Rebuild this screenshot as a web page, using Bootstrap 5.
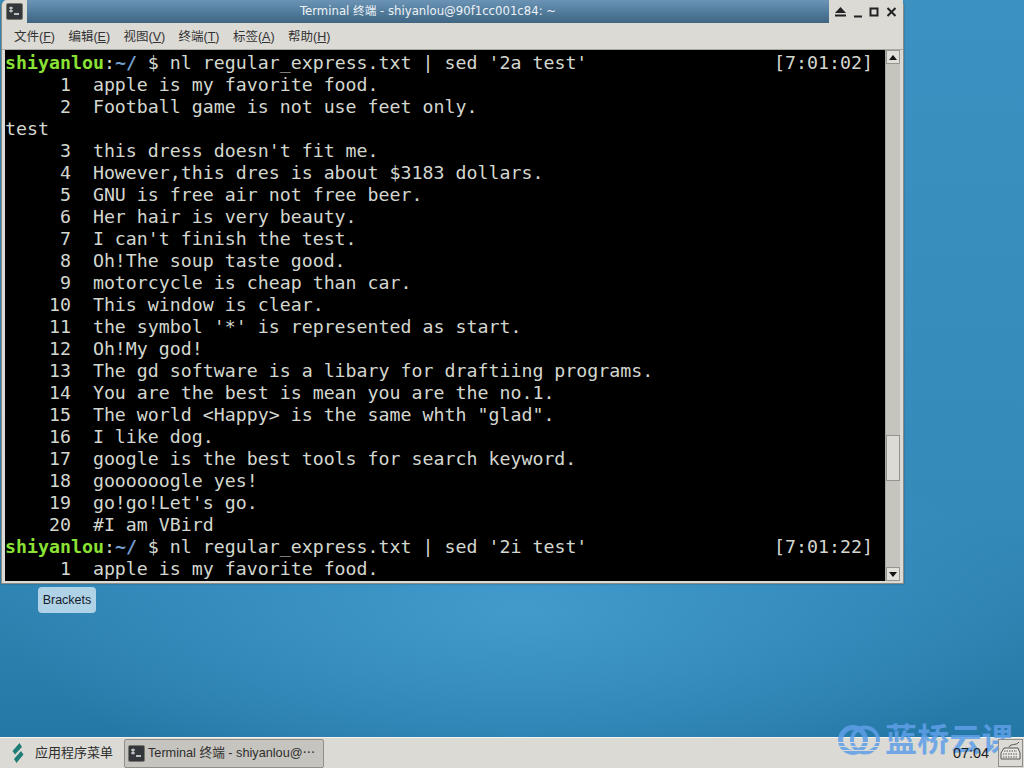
<!DOCTYPE html>
<html lang="zh">
<head>
<meta charset="utf-8">
<title>Terminal</title>
<link rel="stylesheet" href="https://cdn.jsdelivr.net/npm/bootstrap@5.3.0/dist/css/bootstrap.min.css">
<style>
html,body{height:100%;margin:0;overflow:hidden}
body{width:1024px;height:768px;font-family:"Liberation Sans","Noto Sans CJK SC",sans-serif;background:#ddd}
.desk{flex:1 1 auto;position:relative;height:737px;background:radial-gradient(ellipse 520px 190px at 520px 610px,rgba(66,156,205,.95) 0%,rgba(60,148,198,.6) 55%,rgba(60,148,198,0) 100%),linear-gradient(180deg,#3b91c1 0%,#348ab9 70%,#2478a6 100%)}
.win{position:absolute;left:1px;top:0;width:903px;height:584px;background:#dcdad5;border:1px solid #8b8b85;border-top:0;border-radius:6px 6px 0 0;box-shadow:0 0 2px rgba(0,0,0,.35)}
.tbar{height:23px;font-size:11.5px;color:#eef2f6}
.tleft{flex:1 1 auto;height:23px;background:linear-gradient(180deg,#6b93b5 0%,#557f9f 45%,#3f6582 100%);border-radius:5px 0 0 0}
.ticon{width:25px;height:23px;background:#dcdad5;border-radius:5px 0 0 0}
.ttitle{flex:1 1 auto;text-align:center;line-height:23px;font-family:"DejaVu Sans","Noto Sans CJK SC",sans-serif;font-size:11.7px}
.tbtns{width:74px;height:23px;background:#dcdad5;padding:0 6px 0 5px}
.mbar{height:27px;font-size:12.5px;color:#333;padding-left:12px;gap:13.4px;line-height:28px;border-bottom:1px solid #a9a8a2}
.mbar u{text-underline-offset:1px}
.tbody{padding:0 3px;height:533px}
.term{width:882px;height:531px;background:#000;overflow:hidden;margin:0;padding:2px 0 0 0;font:18.25px/22px "DejaVu Sans Mono",monospace;color:#d3d7cf;white-space:pre}
.tline{height:22px;padding-right:12px}
.pg{color:#8ae234;font-weight:700}
.pb{color:#729fcf;font-weight:700}
.sbar{width:15px;height:531px;background:#c5c4bd;border-left:1px solid #aaa9a3}
.sbtn{width:14px;height:14px;background:#e1dfda;border:1px solid #96958f}
.strack{flex:1 1 auto;position:relative}
.sthumb{position:absolute;left:0;top:371px;width:14px;height:46px;background:#dcdad5;border:1px solid #94938d}
.launch{position:absolute;left:38px;top:587px;width:58px;height:26px;background:#b0d2e6;border-radius:4px;color:#14202c;font-size:12.5px;line-height:26px;text-align:center}
.panel{height:31px;flex:none;background:#dcdad5;border-top:1px solid #f3f3f0;position:relative;font-size:12.5px;color:#2e2e2e}
.appmenu{width:124px;padding-left:11px;gap:10px;font-size:13px}
.task{width:200px;height:29px;margin-top:1px;background:#c6c4bf;border:1px solid #8f8e89;border-radius:2px;padding-left:3px;gap:3px;white-space:nowrap;font-size:12.7px}
.clock{position:absolute;left:953px;top:5px;font-size:14.4px;color:#1c1c1c}
.kbd{position:absolute;left:998px;top:1px}
.wm{position:absolute;left:838px;top:-15px;gap:4px;color:#5f9fe8;font-weight:700;font-size:32px;line-height:34px;letter-spacing:.2px;opacity:.85;white-space:nowrap}
</style>
</head>
<body class="d-flex flex-column">
<div class="desk">
  <div class="win d-flex flex-column">
    <div class="tbar d-flex">
      <div class="tleft d-flex">
        <div class="ticon d-flex align-items-center justify-content-center">
          <svg width="17" height="17" viewBox="0 0 17 17"><rect x=".5" y=".5" width="16" height="16" rx="1.5" fill="#33363a" stroke="#77776f"/><path d="M3 5h4M3 8h4M5 3.500v6" stroke="#eee" fill="none"/><path d="M8 11h5" stroke="#eee" stroke-width="1.500"/></svg>
        </div>
        <div class="ttitle">Terminal 终端 - shiyanlou@90f1cc001c84: ~</div>
      </div>
      <div class="tbtns d-flex align-items-center justify-content-between">
        <svg width="13" height="12" viewBox="0 0 13 12"><path d="M6.500 1 12 7H1z" fill="#222"/><path d="M1 9.500h11" stroke="#222" stroke-width="2"/></svg>
        <svg width="11" height="12" viewBox="0 0 11 12"><path d="M1 10.500h8" stroke="#222" stroke-width="2"/></svg>
        <svg width="11" height="12" viewBox="0 0 11 12"><rect x="1.500" y="2.500" width="7" height="7" fill="none" stroke="#222" stroke-width="2"/></svg>
        <svg width="11" height="12" viewBox="0 0 11 12"><path d="M1.500 2l8 8M9.500 2l-8 8" stroke="#222" stroke-width="2"/></svg>
      </div>
    </div>
    <div class="mbar d-flex">
      <span>文件(<u>F</u>)</span><span>编辑(<u>E</u>)</span><span>视图(<u>V</u>)</span><span>终端(<u>T</u>)</span><span>标签(<u>A</u>)</span><span>帮助(<u>H</u>)</span>
    </div>
    <div class="tbody d-flex">
      <div class="term"><div class="tline d-flex justify-content-between"><span><span class="pg">shiyanlou</span>:<span class="pb">~/</span> $ nl regular_express.txt | sed '2a test'</span><span>[7:01:02]</span></div>     1  apple is my favorite food.
     2  Football game is not use feet only.
test
     3  this dress doesn't fit me.
     4  However,this dres is about $3183 dollars.
     5  GNU is free air not free beer.
     6  Her hair is very beauty.
     7  I can't finish the test.
     8  Oh!The soup taste good.
     9  motorcycle is cheap than car.
    10  This window is clear.
    11  the symbol '*' is represented as start.
    12  Oh!My god!
    13  The gd software is a libary for draftiing programs.
    14  You are the best is mean you are the no.1.
    15  The world &lt;Happy&gt; is the same whth "glad".
    16  I like dog.
    17  google is the best tools for search keyword.
    18  goooooogle yes!
    19  go!go!Let's go.
    20  #I am VBird
<div class="tline d-flex justify-content-between"><span><span class="pg">shiyanlou</span>:<span class="pb">~/</span> $ nl regular_express.txt | sed '2i test'</span><span>[7:01:22]</span></div>     1  apple is my favorite food.</div>
      <div class="sbar d-flex flex-column">
        <div class="sbtn d-flex align-items-center justify-content-center"><svg width="8" height="5" viewBox="0 0 8 5"><path d="M4 0l4 5H0z" fill="#111"/></svg></div>
        <div class="strack"><div class="sthumb"></div></div>
        <div class="sbtn d-flex align-items-center justify-content-center"><svg width="8" height="5" viewBox="0 0 8 5"><path d="M4 5L0 0h8z" fill="#111"/></svg></div>
      </div>
    </div>
  </div>
  <div class="launch">Brackets</div>
</div>
<div class="panel d-flex">
  <div class="appmenu d-flex align-items-center">
    <svg width="14" height="20" viewBox="0 0 14 20"><path d="M8.500 0 1.500 8l2.500 3.500L11 4zM10 8l-7 8 2.500 4L12.500 11.500z" fill="#1f7d78"/></svg>
    <span>应用程序菜单</span>
  </div>
  <div class="task d-flex align-items-center">
    <svg width="17" height="17" viewBox="0 0 17 17"><rect x=".5" y=".5" width="16" height="16" rx="1.500" fill="#33363a" stroke="#77776f"/><path d="M3 5h4M3 8h4M5 3.500v6" stroke="#eee" fill="none"/><path d="M8 11h5" stroke="#eee" stroke-width="1.500"/></svg>
    <span>Terminal 终端 - shiyanlou@⋯</span>
  </div>
  <div class="wm d-flex align-items-center">
    <svg width="43" height="30" viewBox="0 0 43 30"><ellipse cx="15" cy="15" rx="12.500" ry="12.500" fill="none" stroke="#5f9fe8" stroke-width="5"/><ellipse cx="27" cy="15" rx="13" ry="12.500" fill="none" stroke="#5f9fe8" stroke-width="4"/><path d="M0 17.500h43M0 21.500h43M0 25.500h43" stroke="#dcdad5" stroke-width="1.200"/></svg>
    <span>蓝桥云课</span>
  </div>
  <div class="clock">07:04</div>
  <svg class="kbd" width="25" height="28" viewBox="0 0 25 28"><rect x=".5" y=".5" width="24" height="27" fill="#dcdad5" stroke="#8f8e89"/><path d="M3 14l3-5h14l2 5v6H3z" fill="#e8e7e2" stroke="#555"/><path d="M6 12h13M5 15h15M5 18h15" stroke="#555" stroke-dasharray="1.500 1"/><path d="M11 8c2-4 7-1 10-5" stroke="#555" fill="none"/></svg>
</div>
<script src="https://cdn.jsdelivr.net/npm/bootstrap@5.3.0/dist/js/bootstrap.bundle.min.js"></script>
</body>
</html>
